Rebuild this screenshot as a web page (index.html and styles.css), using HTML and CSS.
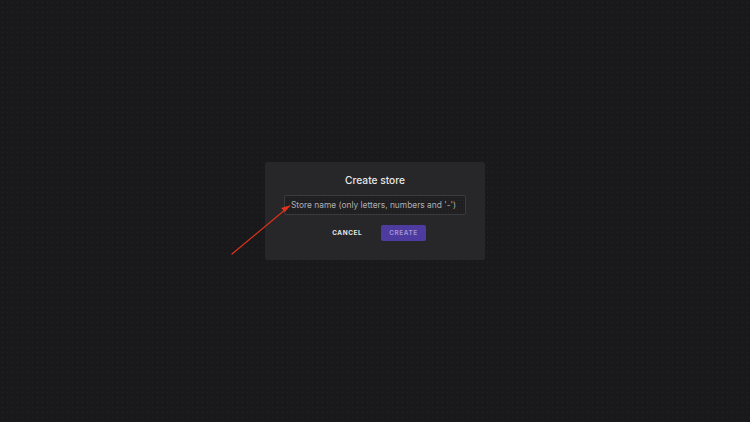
FILE: index.html
```html
<!DOCTYPE html>
<html lang="en">
<head>
  <meta charset="UTF-8">
  <meta name="viewport" content="width=device-width, initial-scale=1.0">
  <title>Create store</title>
  <link rel="stylesheet" href="styles.css">
</head>
<body>
  <div class="dialog">
    <h2 class="dialog-title">Create store</h2>
    <input class="store-input" type="text" placeholder="Store name (only letters, numbers and '-')">
    <div class="actions">
      <button class="btn btn-cancel">CANCEL</button>
      <button class="btn btn-create">CREATE</button>
    </div>
  </div>

  <svg class="pointer" width="750" height="422" viewBox="0 0 750 422">
    <line x1="232" y1="254" x2="286" y2="209" stroke="#e0321c" stroke-width="1.2" stroke-linecap="round"/>
    <polygon points="291,205 281,208 285,212" fill="#e0321c"/>
  </svg>
</body>
</html>
```

FILE: styles.css
```css
:root {
  --bg: #19191b;
  --dot: #252527;
  --panel: #272729;
  --input-bg: #1f1f21;
  --input-border: #3b3b3e;
  --text: #e6e6e8;
  --placeholder: #aeaeb3;
  --primary: #4e3b9f;
  --primary-text: #a399d6;
}
html, body {
  height: 100%;
}
body {
  margin: 0;
  font-family: Inter, "Noto Sans", sans-serif;
  background-color: var(--bg);
  background-image: radial-gradient(var(--dot) 0.8px, transparent 0.9px);
  background-size: 5px 5px;
  display: flex;
  align-items: center;
  justify-content: center;
  overflow: hidden;
}
.dialog {
  width: 220px;
  box-sizing: border-box;
  padding: 11px 19px 19px;
  background: var(--panel);
  border-radius: 2px;
  display: flex;
  flex-direction: column;
  align-items: center;
}
.dialog-title {
  margin: 0 0 8px;
  font-size: 10.2px;
  line-height: 14px;
  font-weight: 500;
  color: var(--text);
}
.store-input {
  width: 100%;
  height: 20px;
  box-sizing: border-box;
  padding: 0 6px;
  background-color: var(--input-bg);
  background-image: radial-gradient(#2a2a2c 0.6px, transparent 0.7px);
  background-size: 3px 3px;
  border: 1px solid var(--input-border);
  border-radius: 2px;
  font-family: inherit;
  font-size: 8.4px;
  color: var(--text);
  outline: none;
}
.store-input::placeholder {
  color: var(--placeholder);
}
.actions {
  margin-top: 10px;
  display: flex;
  gap: 11px;
}
.btn {
  height: 16px;
  padding: 0 8px;
  border: none;
  border-radius: 2px;
  font-family: inherit;
  font-size: 6.4px;
  font-weight: 700;
  letter-spacing: 0.6px;
  background: transparent;
  cursor: pointer;
}
.btn-cancel {
  color: var(--text);
}
.btn-create {
  background: var(--primary);
  color: var(--primary-text);
  font-weight: 600;
}
.pointer {
  position: absolute;
  top: 0;
  left: 0;
  pointer-events: none;
}
```
